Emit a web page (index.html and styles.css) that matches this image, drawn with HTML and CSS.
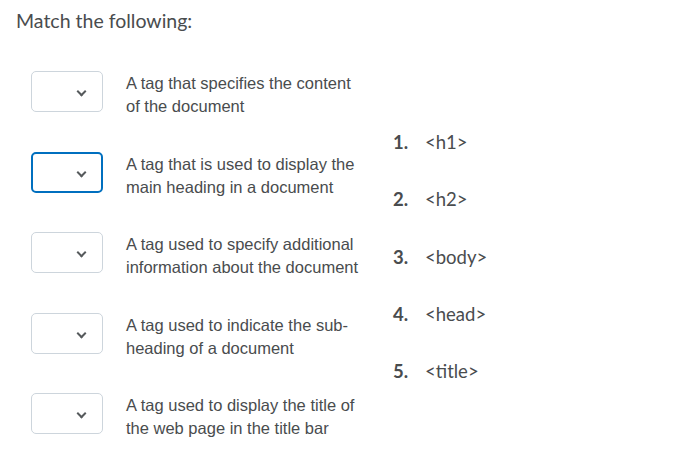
FILE: index.html
```html
<!DOCTYPE html>
<html lang="en">
<head>
    <meta charset="UTF-8">
    <meta name="viewport" content="width=device-width, initial-scale=1.0">
    <title>Match the following</title>
    <link rel="stylesheet" href="styles.css">
</head>
<body>
    <div class="question">
        <div class="question-title">Match the following:</div>

        <div class="match-area">
            <div class="choices">
                <div class="choice">
                    <div class="picker"><span class="chevron"></span></div>
                    <div class="choice-text">A tag that specifies the content<br>of the document</div>
                </div>
                <div class="choice">
                    <div class="picker focused"><span class="chevron"></span></div>
                    <div class="choice-text">A tag that is used to display the<br>main heading in a document</div>
                </div>
                <div class="choice">
                    <div class="picker"><span class="chevron"></span></div>
                    <div class="choice-text">A tag used to specify additional<br>information about the document</div>
                </div>
                <div class="choice">
                    <div class="picker"><span class="chevron"></span></div>
                    <div class="choice-text">A tag used to indicate the sub-<br>heading of a document</div>
                </div>
                <div class="choice">
                    <div class="picker"><span class="chevron"></span></div>
                    <div class="choice-text">A tag used to display the title of<br>the web page in the title bar</div>
                </div>
            </div>

            <ol class="answers">
                <li><span class="num">1.</span><span class="tag">&lt;h1&gt;</span></li>
                <li><span class="num">2.</span><span class="tag">&lt;h2&gt;</span></li>
                <li><span class="num">3.</span><span class="tag">&lt;body&gt;</span></li>
                <li><span class="num">4.</span><span class="tag">&lt;head&gt;</span></li>
                <li><span class="num">5.</span><span class="tag">&lt;title&gt;</span></li>
            </ol>
        </div>
    </div>
</body>
</html>
```

FILE: styles.css
```css
* {
    margin: 0;
    padding: 0;
    box-sizing: border-box;
}

body {
    background: #ffffff;
    color: #494c4e;
    font-family: Lato, "Liberation Sans", sans-serif;
}

.question {
    padding: 9px 16px;
}

.question-title {
    font-size: 19.5px;
    line-height: 24px;
}

.match-area {
    display: flex;
    align-items: center;
    margin-top: 38px;
}

.choices {
    display: flex;
    flex-direction: column;
    gap: 33.5px;
    padding-left: 15px;
    width: 377px;
}

.choice {
    display: flex;
    align-items: flex-start;
}

.picker {
    width: 72px;
    height: 41px;
    border: 1px solid #cdd5dc;
    border-radius: 5px;
    position: relative;
    flex-shrink: 0;
}

.picker.focused {
    border: 2px solid #006fbf;
}

/* small down arrow on the right of each dropdown */
.chevron {
    position: absolute;
    left: 46px;
    top: 16px;
    width: 7px;
    height: 7px;
    border-right: 2px solid #565a5c;
    border-bottom: 2px solid #565a5c;
    transform: rotate(45deg);
}

.picker.focused .chevron {
    left: 45px;
    top: 15px;
}

.choice-text {
    margin-left: 23px;
    font-family: "Liberation Sans", Arial, sans-serif;
    font-size: 16.5px;
    line-height: 23px;
    padding-top: 1px;
}

.answers {
    list-style: none;
    display: flex;
    flex-direction: column;
    gap: 37.25px;
    margin-top: 2px;
}

.answers li {
    display: flex;
    font-size: 18.5px;
    line-height: 20px;
}

.num {
    font-weight: bold;
    width: 32px;
}
```
